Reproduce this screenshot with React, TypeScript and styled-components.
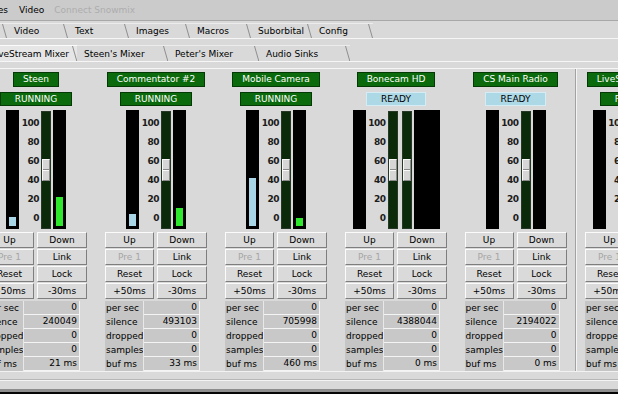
import React from 'react';
import styled, { createGlobalStyle } from 'styled-components';

const GlobalStyle = createGlobalStyle`
  html, body { margin: 0; padding: 0; background: #d9d9d9; }
  body {
    font-family: 'DejaVu Sans', 'Liberation Sans', sans-serif;
    font-size: 9px;
    color: #000;
  }
`;

type Source = {
  name: string;
  status: 'RUNNING' | 'READY';
  dual?: boolean;
  divider?: boolean;
  blue?: number;
  green?: number;
  stats: [string, string, string, string, string];
};

const sources: Source[] = [
  { name: 'Steen', status: 'RUNNING', blue: 9, green: 29, stats: ['0', '240049', '0', '0', '21 ms'] },
  { name: 'Commentator #2', status: 'RUNNING', blue: 12, green: 18, stats: ['0', '493103', '0', '0', '33 ms'] },
  { name: 'Mobile Camera', status: 'RUNNING', blue: 48, green: 8, stats: ['0', '705998', '0', '0', '460 ms'] },
  { name: 'Bonecam HD', status: 'READY', dual: true, stats: ['0', '4388044', '0', '0', '0 ms'] },
  { name: 'CS Main Radio', status: 'READY', divider: true, stats: ['0', '2194022', '0', '0', '0 ms'] },
  { name: 'LiveStream Mixer', status: 'RUNNING', dual: true, stats: ['0', '0', '0', '0', '0 ms'] },
];

const statNames = ['per sec', 'silence', 'dropped', 'samples', 'buf ms'];
const ticks = ['100', '80', '60', '40', '20', '0'];

const Window = styled.div`
  width: 618px;
  height: 394px;
  overflow: hidden;
  background: #d9d9d9;
  display: flex;
  flex-direction: column;
`;

const MenuBar = styled.div`
  flex: none;
  display: flex;
  align-items: center;
  height: 20px;
  background: #cbcbcb;
  border-bottom: 1px solid #a8a8a8;
`;

const MenuClip = styled.div`
  width: 14px;
  box-sizing: border-box;
  padding-right: 6px;
  overflow: hidden;
  display: flex;
  justify-content: flex-end;
  white-space: nowrap;
`;

const MenuItem = styled.div<{ $disabled?: boolean }>`
  padding: 0 5px;
  white-space: nowrap;
  color: ${p => (p.$disabled ? '#adadad' : '#000')};
`;

const TabBar = styled.div<{ $h: number; $top: number }>`
  flex: none;
  display: flex;
  align-items: flex-end;
  height: ${p => p.$h}px;
  margin-top: ${p => p.$top}px;
  border-bottom: 1px solid #f6f6f6;
`;

const Tab = styled.div<{ $w: number; $selected?: boolean; $right?: boolean }>`
  position: relative;
  flex: none;
  width: ${p => p.$w}px;
  height: 100%;
  box-sizing: border-box;
  display: flex;
  align-items: center;
  justify-content: ${p => (p.$right ? 'flex-end' : 'flex-start')};
  padding: ${p => (p.$right ? '0 8px 0 0' : '0 0 0 7px')};
  overflow: hidden;
  white-space: nowrap;
  background: ${p => (p.$selected ? '#e6e6e6' : 'transparent')};
  border-top: 1px solid ${p => (p.$selected ? '#fbfbfb' : '#ececec')};

  &::after {
    content: '';
    position: absolute;
    top: 0;
    bottom: 0;
    right: 4px;
    border-left: 1px solid #8e8e8e;
    transform: skewX(16deg);
    transform-origin: top;
  }
`;

const Panel = styled.div`
  flex: none;
  margin-top: 6px;
  border-top: 1px solid #f6f6f6;
`;

const Columns = styled.div`
  display: flex;
  margin-left: -24px;
  width: max-content;
`;

const Column = styled.div<{ $divider?: boolean }>`
  flex: none;
  width: 120px;
  box-sizing: border-box;
  padding-top: 3px;
  display: flex;
  flex-direction: column;
  align-items: center;
  border-right: ${p => (p.$divider ? '1px solid #a2a2a2' : 'none')};
  box-shadow: ${p => (p.$divider ? '1px 0 0 #f4f4f4' : 'none')};
`;

const NameLabel = styled.div`
  height: 15px;
  box-sizing: border-box;
  line-height: 13px;
  padding: 0 9px;
  white-space: nowrap;
  color: #fff;
  background: #0b6a0b;
  border: 1px solid #043a04;
  margin-bottom: 5px;
`;

const StatusLabel = styled.div<{ $ready: boolean }>`
  height: 14px;
  box-sizing: border-box;
  line-height: 12px;
  padding: 0 14px;
  white-space: nowrap;
  color: ${p => (p.$ready ? '#000' : '#fff')};
  background: ${p => (p.$ready ? '#add8e6' : '#0b6a0b')};
  border: 1px solid ${p => (p.$ready ? '#d6ecf4' : '#043a04')};
  margin-bottom: 4px;
`;

const MeterBlock = styled.div`
  display: flex;
  align-items: flex-end;
  height: 119px;
  margin-bottom: 3px;
`;

const Meter = styled.div<{ $w: number }>`
  width: ${p => p.$w}px;
  height: 119px;
  box-sizing: border-box;
  padding: 3px;
  background: #000;
  display: flex;
  flex-direction: column;
  justify-content: flex-end;
`;

const Bar = styled.div<{ $color: string }>`
  flex: none;
  background: ${p => p.$color};
`;

const Scale = styled.div`
  width: 22px;
  height: 119px;
  box-sizing: border-box;
  padding: 8px 2px 6px 0;
  display: flex;
  flex-direction: column;
  justify-content: space-between;
  text-align: right;
  font-size: 9px;
  font-weight: bold;
  letter-spacing: -0.5px;
  line-height: 10px;
  color: #1c1c1c;
`;

const Trough = styled.div<{ $gap: number }>`
  position: relative;
  width: 10px;
  height: 118px;
  box-sizing: border-box;
  background: #0a2a0a;
  border: 1px solid #263826;
  margin-right: ${p => p.$gap}px;
`;

const Handle = styled.div`
  position: absolute;
  left: 0;
  right: 0;
  top: 47px;
  height: 22px;
  box-sizing: border-box;
  background: #d6d6d6;
  border: 1px solid;
  border-color: #f8f8f8 #8a8a8a #8a8a8a #f8f8f8;

  &::after {
    content: '';
    position: absolute;
    left: 0;
    right: 0;
    top: 9px;
    border-top: 1px solid #8a8a8a;
    border-bottom: 1px solid #fafafa;
  }
`;

const Controls = styled.div`
  width: 102px;
  display: flex;
  flex-direction: column;
  gap: 2px;
`;

const ButtonGrid = styled.div`
  display: grid;
  grid-template-columns: 49px 50px;
  grid-auto-rows: 16px;
  column-gap: 3px;
  row-gap: 1px;
`;

const Button = styled.div<{ $disabled?: boolean }>`
  box-sizing: border-box;
  line-height: 14px;
  text-align: center;
  white-space: nowrap;
  background: #dadada;
  color: ${p => (p.$disabled ? '#a6a6a6' : '#000')};
  border: 1px solid;
  border-color: #fbfbfb #7e7e7e #7e7e7e #fbfbfb;
`;

const Stats = styled.div`
  display: grid;
  grid-template-columns: 39px 56px;
  grid-auto-rows: 14px;
`;

const StatName = styled.div`
  background: #c5c5c5;
  line-height: 14px;
  padding-left: 1px;
  white-space: nowrap;
  overflow: hidden;
  border-right: 1px solid #e8e8e8;
`;

const StatValue = styled.div`
  box-sizing: border-box;
  background: #c8c8c8;
  line-height: 13px;
  text-align: right;
  padding-right: 2px;
  white-space: nowrap;
  border-right: 1px solid #f4f4f4;
  border-bottom: 1px solid #f4f4f4;
`;

const FooterBand = styled.div<{ $h: number; $top: string; $bottom: string; $bw: number }>`
  flex: none;
  height: ${p => p.$h}px;
  border-top: 1px solid ${p => p.$top};
  border-bottom: ${p => p.$bw}px solid ${p => p.$bottom};
`;

const BlackStrip = styled.div`
  flex: 1;
  background: #050505;
`;

const MeterArea = ({ s }: { s: Source }) => (
  <MeterBlock>
    <Meter $w={13}>
      {s.blue ? <Bar $color="#a9d6e6" style={{ height: s.blue }} /> : null}
    </Meter>
    <Scale>
      {ticks.map(t => (
        <div key={t}>{t}</div>
      ))}
    </Scale>
    <Trough $gap={s.dual ? 4 : 2}>
      <Handle />
    </Trough>
    {s.dual && (
      <Trough $gap={2}>
        <Handle />
      </Trough>
    )}
    <Meter $w={s.dual ? 26 : 13}>
      {s.green ? <Bar $color="#2ee82e" style={{ height: s.green }} /> : null}
    </Meter>
  </MeterBlock>
);

const SourceColumn = ({ s }: { s: Source }) => (
  <Column $divider={s.divider}>
    <NameLabel>{s.name}</NameLabel>
    <StatusLabel $ready={s.status === 'READY'}>{s.status}</StatusLabel>
    <MeterArea s={s} />
    <Controls>
      <ButtonGrid>
        <Button>Up</Button>
        <Button>Down</Button>
        <Button $disabled>Pre 1</Button>
        <Button>Link</Button>
        <Button>Reset</Button>
        <Button>Lock</Button>
        <Button>+50ms</Button>
        <Button>-30ms</Button>
      </ButtonGrid>
      <Stats>
        {statNames.map((n, i) => (
          <React.Fragment key={n}>
            <StatName>{n}</StatName>
            <StatValue>{s.stats[i]}</StatValue>
          </React.Fragment>
        ))}
      </Stats>
    </Controls>
  </Column>
);

const topTabs = ['Video', 'Text', 'Images', 'Macros', 'Suborbital', 'Config'];
const mixerTabs = ["Steen's Mixer", "Peter's Mixer", 'Audio Sinks'];

export default function App() {
  return (
    <>
      <GlobalStyle />
      <Window>
        <MenuBar>
          <MenuClip>
            <span>Sources</span>
          </MenuClip>
          <MenuItem>Video</MenuItem>
          <MenuItem $disabled>Connect Snowmix</MenuItem>
        </MenuBar>
        <TabBar $h={15} $top={2}>
          <Tab $w={5} />
          {topTabs.map(t => (
            <Tab key={t} $w={61}>
              {t}
            </Tab>
          ))}
        </TabBar>
        <TabBar $h={16} $top={6}>
          <Tab $w={77} $selected $right>
            LiveStream Mixer
          </Tab>
          {mixerTabs.map(t => (
            <Tab key={t} $w={91}>
              {t}
            </Tab>
          ))}
        </TabBar>
        <Panel>
          <Columns>
            {sources.map(s => (
              <SourceColumn key={s.name} s={s} />
            ))}
          </Columns>
        </Panel>
        <FooterBand $h={7} $top="#f2f2f2" $bottom="#b6b6b6" $bw={1} />
        <FooterBand $h={8} $top="#f4f4f4" $bottom="#8e8e8e" $bw={3} />
        <BlackStrip />
      </Window>
    </>
  );
}
